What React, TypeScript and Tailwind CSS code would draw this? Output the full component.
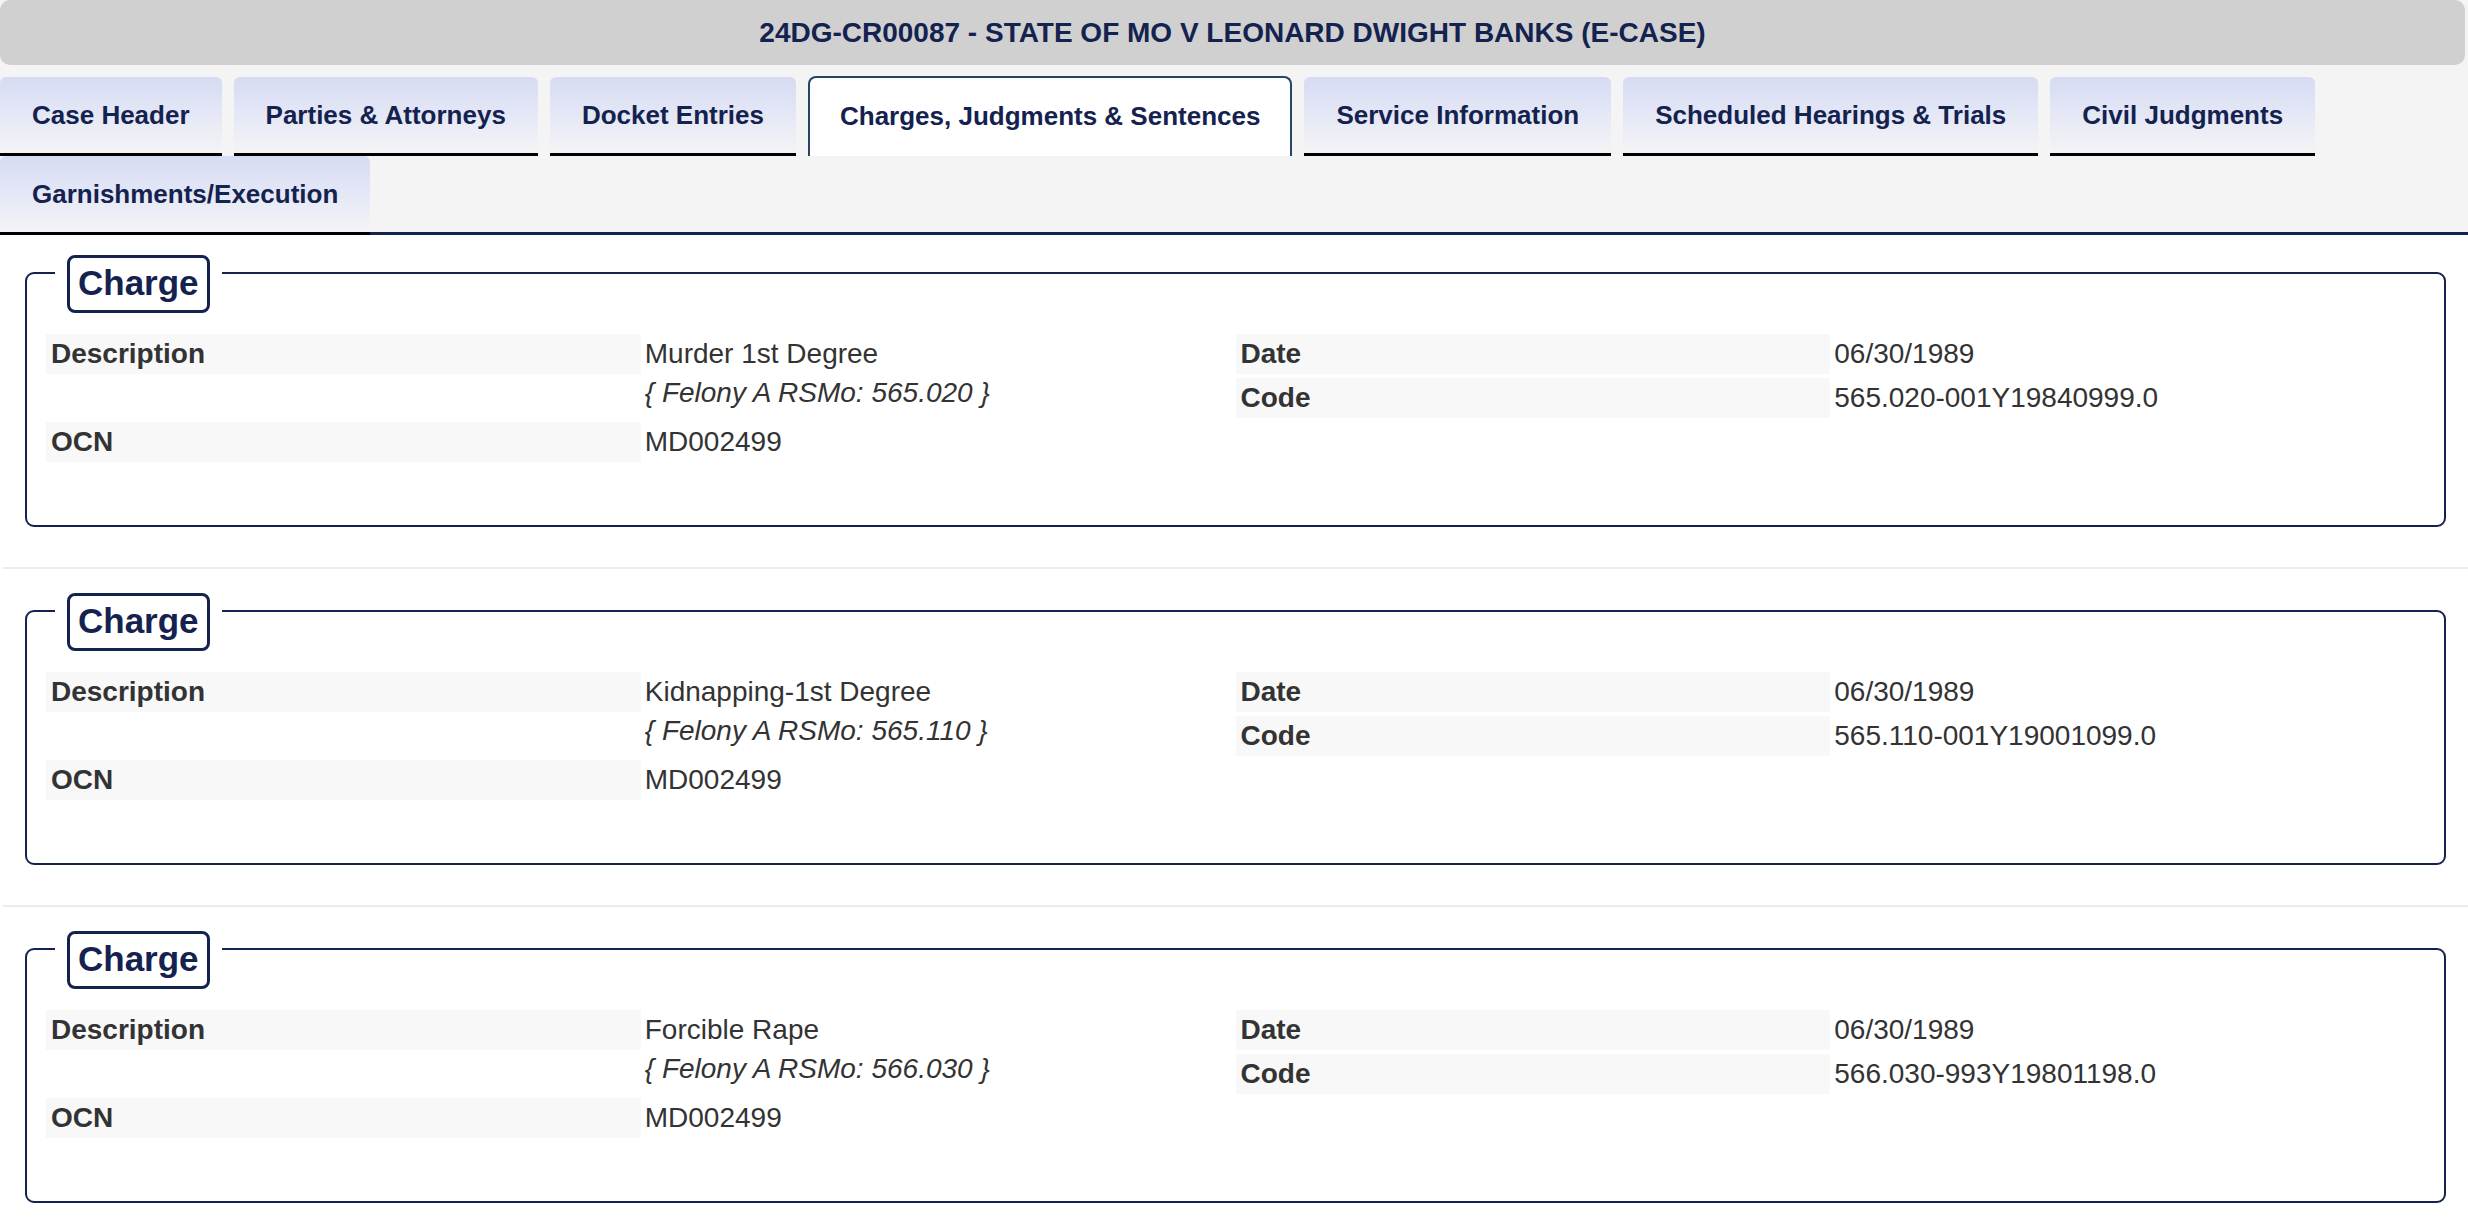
import type { ReactNode } from 'react';

interface Charge {
  description: string;
  statute: string;
  ocn: string;
  date: string;
  code: string;
}

const charges: Charge[] = [
  {
    description: 'Murder 1st Degree',
    statute: '{ Felony A RSMo: 565.020 }',
    ocn: 'MD002499',
    date: '06/30/1989',
    code: '565.020-001Y19840999.0',
  },
  {
    description: 'Kidnapping-1st Degree',
    statute: '{ Felony A RSMo: 565.110 }',
    ocn: 'MD002499',
    date: '06/30/1989',
    code: '565.110-001Y19001099.0',
  },
  {
    description: 'Forcible Rape',
    statute: '{ Felony A RSMo: 566.030 }',
    ocn: 'MD002499',
    date: '06/30/1989',
    code: '566.030-993Y19801198.0',
  },
];

const tabs = [
  'Case Header',
  'Parties & Attorneys',
  'Docket Entries',
  'Charges, Judgments & Sentences',
  'Service Information',
  'Scheduled Hearings & Trials',
  'Civil Judgments',
  'Garnishments/Execution',
];

const activeTab = 'Charges, Judgments & Sentences';

function Label({ children }: { children: ReactNode }) {
  return (
    <div className="h-[40px] self-start bg-[#f8f8f8] px-[5px] text-[28px] leading-[40px] font-bold text-[#333333]">
      {children}
    </div>
  );
}

function Value({ children }: { children: ReactNode }) {
  return <div className="h-[40px] px-[4px] text-[28px] leading-[40px] text-[#333333]">{children}</div>;
}

function ChargeBlock({ charge }: { charge: Charge }) {
  return (
    <>
      <fieldset className="mx-[22px] min-w-0 rounded-[9px] border-2 border-[#14224f] px-[19px] pt-0 pb-[63px]">
        <legend className="ml-[9px] h-[36px] px-[12px]">
          <div className="rounded-[8px] border-[3px] border-[#14224f] px-[8px] pb-[2px] text-[35px] leading-[50px] font-bold text-[#14224f]">
            Charge
          </div>
        </legend>

        <div className="mt-[43px] flex">
          {/* left: description / ocn */}
          <div className="grid w-1/2 grid-cols-2 content-start gap-y-[4px]">
            <Label>Description</Label>
            <div className="px-[4px] text-[28px] text-[#333333]">
              <div className="h-[40px] leading-[40px]">{charge.description}</div>
              <div className="pb-[6px] leading-[38px] italic">{charge.statute}</div>
            </div>
            <Label>OCN</Label>
            <Value>{charge.ocn}</Value>
          </div>

          {/* right: date / code */}
          <div className="grid w-1/2 grid-cols-2 content-start gap-y-[4px]">
            <Label>Date</Label>
            <Value>{charge.date}</Value>
            <Label>Code</Label>
            <Value>{charge.code}</Value>
          </div>
        </div>
      </fieldset>
      <div className="mt-[40px] mb-[24px] h-[2px] bg-[#ececec]" />
    </>
  );
}

export default function App() {
  return (
    <div className="min-h-screen bg-white font-['Liberation_Sans',Arial,Helvetica,sans-serif]">
      {/* Case title + tabs */}
      <div className="bg-[#f4f4f4]">
        <div className="mr-[3px] flex h-[65px] items-center justify-center rounded-[10px] bg-[#d0d0d0]">
          <h1 className="text-[28px] font-bold text-[#14224f]">
            24DG-CR00087 - STATE OF MO V LEONARD DWIGHT BANKS (E-CASE)
          </h1>
        </div>

        <ul className="mt-[12px] flex flex-wrap shadow-[inset_0_-3px_0_#14224f]">
          {tabs.map((tab) =>
            tab === activeTab ? (
              <li
                key={tab}
                className="mr-[12px] -mt-[1px] flex h-[80px] items-center rounded-t-[8px] border-2 border-b-0 border-[#264566] bg-white px-[30px] pb-[1px] text-[26px] font-bold whitespace-nowrap text-[#14224f]"
              >
                {tab}
              </li>
            ) : (
              <li
                key={tab}
                className="mr-[12px] flex h-[79px] items-center rounded-t-[6px] border-b-[3px] border-black bg-linear-to-b from-[#d6dbf4] to-[#f4f4f6] px-[32px] text-[26px] font-bold whitespace-nowrap text-[#14224f]"
              >
                {tab}
              </li>
            ),
          )}
        </ul>
      </div>

      {/* Charges */}
      <div className="pt-[20px] pl-[3px]">
        {charges.map((c) => (
          <ChargeBlock key={c.code} charge={c} />
        ))}
      </div>
    </div>
  );
}
